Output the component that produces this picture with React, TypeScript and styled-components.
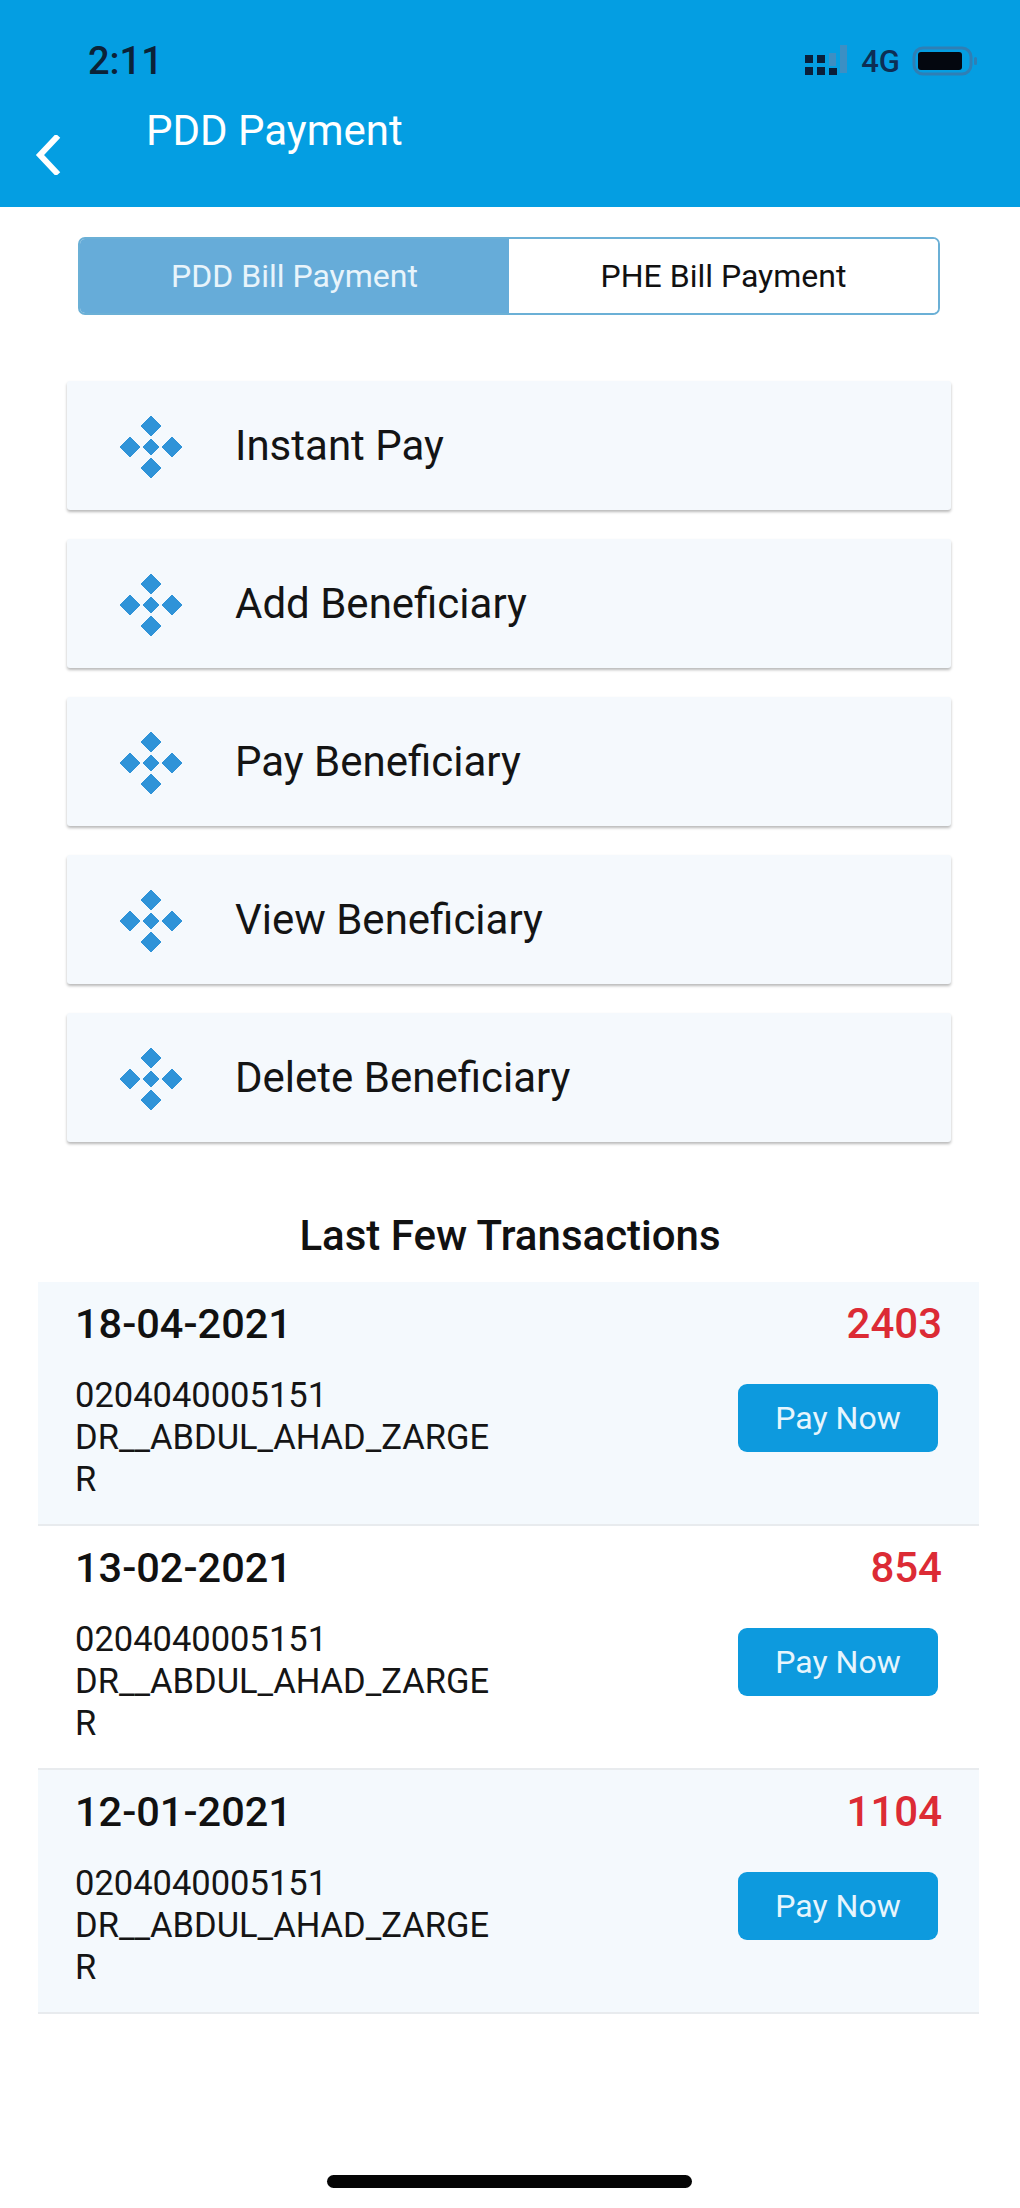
import React from 'react';
import styled, { createGlobalStyle } from 'styled-components';

const GlobalStyle = createGlobalStyle`
    html, body {
        margin: 0;
        padding: 0;
        background: #ffffff;
        font-family: Roboto, "Liberation Sans", sans-serif;
    }
    * {
        box-sizing: border-box;
    }
`;

const Page = styled.div`
    width: 1020px;
    height: 2208px;
    display: flex;
    flex-direction: column;
    overflow: hidden;
    background: #ffffff;
`;

const Header = styled.header`
    height: 207px;
    background: #049ee2;
    display: flex;
    flex-direction: column;
    padding: 40px 36px 0 36px;
`;

const StatusBar = styled.div`
    display: flex;
    align-items: center;
    justify-content: space-between;
    height: 42px;
    padding-left: 52px;
    padding-right: 6px;
`;

const Time = styled.span`
    font-size: 38px;
    font-weight: 500;
    color: #0b2238;
`;

const StatusIcons = styled.div`
    display: flex;
    align-items: center;
    gap: 12px;
    color: #0d2e55;
    font-size: 31px;
    font-weight: 500;
`;

const TitleRow = styled.div`
    display: flex;
    align-items: flex-start;
    margin-top: 24px;
`;

const BackButton = styled.div`
    width: 110px;
    height: 50px;
    padding-top: 29px;
    margin-left: -4px;
    margin-right: 4px;

    svg {
        display: block;
    }
`;

const Title = styled.h1`
    margin: 0;
    font-size: 42px;
    line-height: 50px;
    font-weight: 400;
    color: #ffffff;
`;

const Tabs = styled.div`
    display: flex;
    margin: 30px 80px 0 78px;
    height: 78px;
    border: 2px solid #6bb0d6;
    border-radius: 7px;
    overflow: hidden;
`;

const Tab = styled.div<{ $active?: boolean }>`
    flex: 1;
    display: flex;
    align-items: center;
    justify-content: center;
    font-size: 32px;
    background: ${(p) => (p.$active ? '#66acd9' : '#ffffff')};
    color: ${(p) => (p.$active ? '#e8f4fb' : '#111111')};
`;

const Menu = styled.div`
    display: flex;
    flex-direction: column;
    gap: 29px;
    margin: 66px 69px 0 67px;
`;

const MenuCard = styled.div`
    height: 129px;
    display: flex;
    align-items: center;
    gap: 53px;
    padding-left: 53px;
    padding-bottom: 1px;
    background: #f5f9fd;
    border-radius: 3px;
    box-shadow: 0 2px 3px rgba(0, 0, 0, 0.28);
    font-size: 42px;
    color: #141414;

    svg {
        margin-top: 3px;
    }
`;

const Heading = styled.h2`
    margin: 69px 0 0;
    height: 50px;
    line-height: 50px;
    text-align: center;
    font-size: 42px;
    font-weight: 500;
    color: #111111;
`;

const TransactionList = styled.div`
    margin: 21px 41px 0 38px;
    display: flex;
    flex-direction: column;
`;

const TransactionRow = styled.div<{ $tinted?: boolean }>`
    height: 244px;
    padding: 16px 37px 0 37px;
    background: ${(p) => (p.$tinted ? '#f4f9fd' : '#ffffff')};
    border-bottom: 2px solid #e8ebee;
`;

const RowTop = styled.div`
    display: flex;
    align-items: center;
    justify-content: space-between;
    height: 50px;
`;

const DateText = styled.span`
    font-size: 41.5px;
    font-weight: 500;
    color: #111111;
`;

const Amount = styled.span`
    font-size: 42px;
    font-weight: 500;
    color: #dc2b35;
`;

const RowBottom = styled.div`
    display: flex;
    justify-content: space-between;
    align-items: flex-start;
    margin-top: 26px;
`;

const Account = styled.div`
    width: 426px;
    font-size: 34.5px;
    line-height: 42px;
    color: #151515;
    word-break: break-all;
`;

const PayButton = styled.div`
    width: 200px;
    height: 68px;
    margin-top: 10px;
    margin-right: 4px;
    display: flex;
    align-items: center;
    justify-content: center;
    border-radius: 9px;
    background: #0d9ade;
    color: #e6f5fd;
    font-size: 32px;
`;

const Spacer = styled.div`
    flex: 1;
`;

const HomeBar = styled.div`
    width: 365px;
    height: 13px;
    margin: 0 auto 20px;
    transform: translateX(-1px);
    border-radius: 7px;
    background: #050505;
`;

const BackIcon = () => (
    <svg width="30" height="40" viewBox="0 0 30 40">
        <path d="M24 3 L8 20 L24 37" fill="none" stroke="#ffffff" strokeWidth="6" strokeLinecap="square" />
    </svg>
);

const SignalIcon = () => (
    <svg width="46" height="36" viewBox="0 0 46 36">
        <rect x="2" y="12" width="8" height="8" fill="#0a1f3a" />
        <rect x="14" y="12" width="8" height="8" fill="#0a1f3a" />
        <rect x="2" y="24" width="8" height="8" fill="#0a1f3a" />
        <rect x="14" y="24" width="8" height="8" fill="#0a1f3a" />
        <rect x="26" y="25" width="8" height="7" fill="#0a1f3a" />
        <rect x="26" y="10" width="7" height="13" fill="#3c8fc4" />
        <rect x="37" y="2" width="7" height="28" fill="#3c8fc4" />
    </svg>
);

const BatteryIcon = () => (
    <svg width="66" height="32" viewBox="0 0 66 32">
        <rect x="2" y="3" width="57" height="26" rx="9" fill="none" stroke="#2f7fb5" strokeWidth="3" />
        <rect x="6" y="7" width="44" height="18" rx="3" fill="#04070f" />
        <rect x="62" y="12" width="3" height="8" rx="1.5" fill="#2f7fb5" />
    </svg>
);

// five diamonds in a cross, the middle one a little smaller
const diamonds = [
    { cx: 31, cy: 10, r: 10 },
    { cx: 10, cy: 31, r: 10 },
    { cx: 31, cy: 31, r: 8 },
    { cx: 52, cy: 31, r: 10 },
    { cx: 31, cy: 52, r: 10 },
];

const DotsIcon = () => (
    <svg width="62" height="62" viewBox="0 0 62 62">
        {diamonds.map(({ cx, cy, r }) => (
            <polygon
                key={`${cx}-${cy}`}
                points={`${cx},${cy - r} ${cx + r},${cy} ${cx},${cy + r} ${cx - r},${cy}`}
                fill="#2f93d8"
                stroke="#2f93d8"
                strokeWidth="1"
                strokeLinejoin="round"
            />
        ))}
    </svg>
);

const menuItems = ['Instant Pay', 'Add Beneficiary', 'Pay Beneficiary', 'View Beneficiary', 'Delete Beneficiary'];

const transactions = [
    { date: '18-04-2021', amount: '2403' },
    { date: '13-02-2021', amount: '854' },
    { date: '12-01-2021', amount: '1104' },
];

const App: React.FC = () => {
    return (
        <Page>
            <GlobalStyle />
            <Header>
                <StatusBar>
                    <Time>2:11</Time>
                    <StatusIcons>
                        <SignalIcon />
                        <span>4G</span>
                        <BatteryIcon />
                    </StatusIcons>
                </StatusBar>
                <TitleRow>
                    <BackButton>
                        <BackIcon />
                    </BackButton>
                    <Title>PDD Payment</Title>
                </TitleRow>
            </Header>
            <Tabs>
                <Tab $active>PDD Bill Payment</Tab>
                <Tab>PHE Bill Payment</Tab>
            </Tabs>
            <Menu>
                {menuItems.map((item) => (
                    <MenuCard key={item}>
                        <DotsIcon />
                        <span>{item}</span>
                    </MenuCard>
                ))}
            </Menu>
            <Heading>Last Few Transactions</Heading>
            <TransactionList>
                {transactions.map((t, i) => (
                    <TransactionRow key={t.date} $tinted={i !== 1}>
                        <RowTop>
                            <DateText>{t.date}</DateText>
                            <Amount>{t.amount}</Amount>
                        </RowTop>
                        <RowBottom>
                            <Account>0204040005151<br />DR__ABDUL_AHAD_ZARGER</Account>
                            <PayButton>Pay Now</PayButton>
                        </RowBottom>
                    </TransactionRow>
                ))}
            </TransactionList>
            <Spacer />
            <HomeBar />
        </Page>
    );
};

export default App;
